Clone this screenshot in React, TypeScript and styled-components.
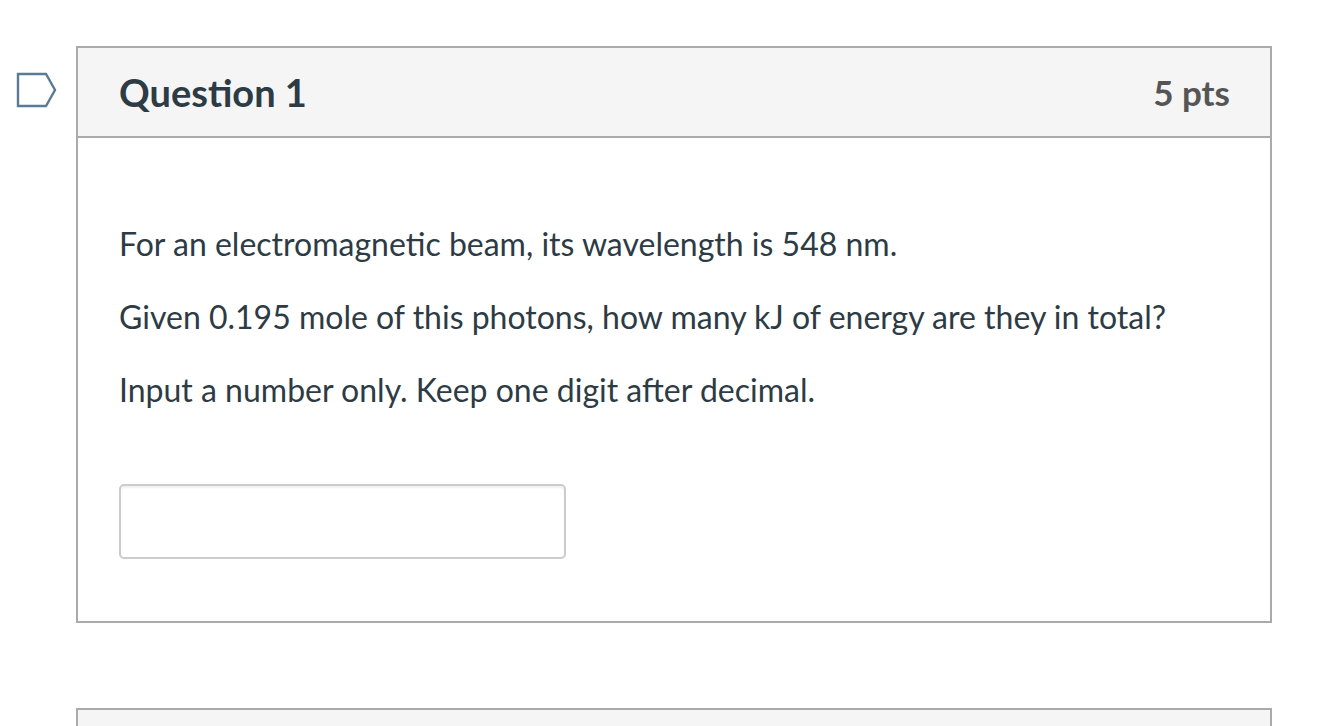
import React from 'react'
import styled, { createGlobalStyle } from 'styled-components'

const GlobalStyle = createGlobalStyle`
	html, body {
		margin: 0;
		padding: 0;
		background: #ffffff;
		font-family: Lato, 'Helvetica Neue', Arial, sans-serif;
		color: #2d3b45;
	}
`

const Page = styled.div`
	display: flex;
	flex-direction: column;
	gap: 85px;
	padding-top: 46px;
	height: 726px;
	box-sizing: border-box;
	overflow: hidden;
`

const QuestionRow = styled.div`
	display: flex;
	align-items: flex-start;
`

const FlagColumn = styled.div`
	width: 76px;
	flex-shrink: 0;
	display: flex;
	justify-content: flex-start;
	padding: 26px 0 0 16px;
	box-sizing: border-box;
`

const Card = styled.div`
	width: 1196px;
	border: 2px solid #aaaaaa;
	box-sizing: border-box;
	background: #ffffff;
`

const CardHeader = styled.div`
	display: flex;
	justify-content: space-between;
	align-items: center;
	height: 90px;
	padding: 0 40px 0 41px;
	background: #f5f5f5;
	border-bottom: 2px solid #aaaaaa;
	box-sizing: border-box;
`

const QuestionTitle = styled.h2`
	margin: 0;
	font-size: 38px;
	font-weight: 700;
	color: #2d3b45;
`

const Points = styled.div`
	font-size: 35px;
	font-weight: 700;
	color: #555555;
`

const CardBody = styled.div`
	padding: 87px 40px 62px 41px;
`

const Paragraph = styled.p`
	margin: 0 0 35px;
	font-size: 32px;
	line-height: 38px;
	color: #2d3b45;
`

const AnswerInput = styled.input`
	display: block;
	margin-top: 75px;
	width: 447px;
	height: 75px;
	border: 2px solid #cccccc;
	border-radius: 5px;
	box-shadow: inset 0 2px 2px rgba(0, 0, 0, 0.06);
	box-sizing: border-box;
	font-family: inherit;
	font-size: 28px;
	padding: 0 14px;
	outline: none;
`

const EmptyCard = styled(Card)`
	height: 40px;
	border-bottom: none;
	background: #f5f5f5;
`

const FlagIcon = () => (
	<svg width="42" height="36" viewBox="0 0 42 36">
		<path
			d="M2 2 H30 L39 18 L30 34 H2 Z"
			fill="none"
			stroke="#5b7b95"
			strokeWidth="2.4"
			strokeLinejoin="miter"
		/>
	</svg>
)

const App = () => {
	return (
		<>
			<GlobalStyle />
			<Page>
				<QuestionRow>
					<FlagColumn>
						<FlagIcon />
					</FlagColumn>
					<Card>
						<CardHeader>
							<QuestionTitle>Question 1</QuestionTitle>
							<Points>5 pts</Points>
						</CardHeader>
						<CardBody>
							<Paragraph>For an electromagnetic beam, its wavelength is 548 nm.</Paragraph>
							<Paragraph>Given 0.195 mole of this photons, how many kJ of energy are they in total?</Paragraph>
							<Paragraph>Input a number only. Keep one digit after decimal.</Paragraph>
							<AnswerInput type="text" aria-label="answer" />
						</CardBody>
					</Card>
				</QuestionRow>
				<QuestionRow>
					<FlagColumn />
					<EmptyCard />
				</QuestionRow>
			</Page>
		</>
	)
}

export default App
